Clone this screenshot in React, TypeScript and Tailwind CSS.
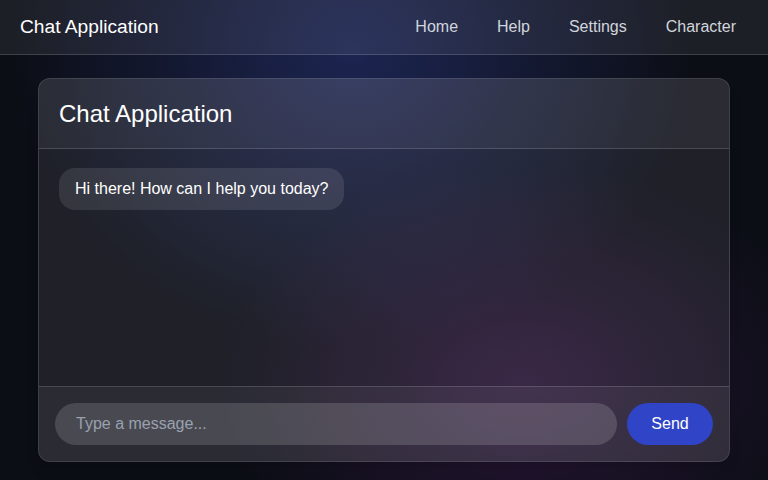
export default function App() {
  const links = ['Home', 'Help', 'Settings', 'Character'];

  return (
    <div className="relative h-[480px] w-full overflow-hidden bg-[#0c0e16] font-['Liberation_Sans',Arial,sans-serif] text-white">
      {/* glow layers */}
      <div className="pointer-events-none absolute inset-0 bg-[radial-gradient(ellipse_340px_300px_at_46%_10%,rgba(45,60,140,0.5),transparent_100%)]" />
      <div className="pointer-events-none absolute inset-0 bg-[radial-gradient(ellipse_300px_220px_at_68%_80%,rgba(90,35,110,0.38),transparent_100%)]" />

      <div className="relative flex h-full flex-col">
        {/* Navbar */}
        <nav className="flex h-[55px] shrink-0 items-center justify-between border-b border-white/15 bg-white/[0.07] pl-5 pr-8">
          <div className="text-[19.2px] text-white">Chat Application</div>
          <div className="flex items-center gap-[39px]">
            {links.map((l) => (
              <a key={l} className="text-base text-gray-300">
                {l}
              </a>
            ))}
          </div>
        </nav>

        {/* Chat card */}
        <div className="mx-auto mt-[23px] flex h-[384px] w-[692px] flex-col overflow-hidden rounded-xl border border-white/15 bg-white/[0.08] shadow-lg">
          <div className="flex h-[70px] shrink-0 items-center border-b border-white/15 bg-white/[0.05] px-5">
            <h2 className="text-2xl text-white">Chat Application</h2>
          </div>

          <div className="flex flex-1 flex-col items-start px-5 pt-[19px]">
            <div className="rounded-2xl bg-white/10 px-4 py-[9px] text-base text-white">
              Hi there! How can I help you today?
            </div>
          </div>

          <div className="flex h-[75px] shrink-0 items-center gap-[10px] border-t border-white/15 bg-white/[0.05] px-4">
            <input
              className="h-[42px] flex-1 rounded-full bg-white/15 pl-[21px] pr-5 text-base text-white outline-none placeholder:text-gray-400"
              placeholder="Type a message..."
            />
            <button className="h-[42px] w-[86px] rounded-full bg-[#2f44c6] text-base text-white">
              Send
            </button>
          </div>
        </div>
      </div>
    </div>
  );
}
